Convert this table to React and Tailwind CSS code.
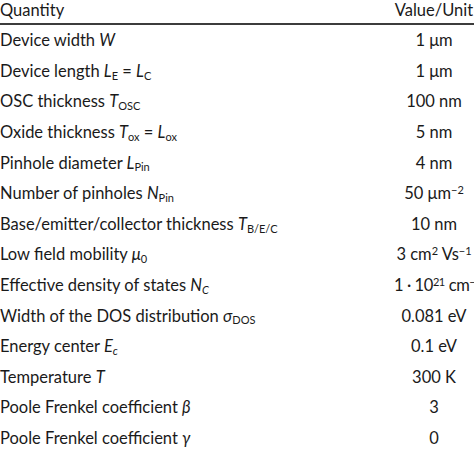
import React from 'react';

const Sub = ({ children }) => <sub className="text-[11px] not-italic">{children}</sub>;
const Sup = ({ children }) => <sup className="text-[11px]">{children}</sup>;
const V = ({ children }) => <i className="italic">{children}</i>;

const ROWS = [
  [<>Device width <V>W</V></>, <>1 μm</>],
  [<>Device length <V>L</V><Sub>E</Sub> = <V>L</V><Sub>C</Sub></>, <>1 μm</>],
  [<>OSC thickness <V>T</V><Sub>OSC</Sub></>, <>100 nm</>],
  [<>Oxide thickness <V>T</V><Sub>ox</Sub> = <V>L</V><Sub>ox</Sub></>, <>5 nm</>],
  [<>Pinhole diameter <V>L</V><Sub>Pin</Sub></>, <>4 nm</>],
  [<>Number of pinholes <V>N</V><Sub>Pin</Sub></>, <>50 μm<Sup>−2</Sup></>],
  [<>Base/emitter/collector thickness <V>T</V><Sub>B/E/C</Sub></>, <>10 nm</>],
  [<>Low field mobility <V>μ</V><Sub>0</Sub></>, <>3 cm<Sup>2</Sup> Vs<Sup>−1</Sup></>],
  [
    <>Effective density of states <V>N</V><sub className="text-[11px] italic">C</sub></>,
    <span className="tracking-[-0.4px]">1{'\u202F'}·{'\u202F'}10<Sup>21</Sup> cm<Sup>−3</Sup></span>,
  ],
  [<>Width of the DOS distribution <V>σ</V><Sub>DOS</Sub></>, <>0.081 eV</>],
  [<>Energy center <V>E</V><sub className="text-[11px] italic">c</sub></>, <>0.1 eV</>],
  [<>Temperature <V>T</V></>, <>300 K</>],
  [<>Poole Frenkel coefficient <V>β</V></>, <>3</>],
  [<>Poole Frenkel coefficient <V>γ</V></>, <>0</>],
];

export default function App() {
  return (
    <div
      className="w-[474px] h-[450px] overflow-hidden bg-white text-[#1a1a1a] text-[16.5px]"
      style={{ fontFamily: 'Lato, "Open Sans", sans-serif' }}
    >
      <div className="flex h-[25px] border-b-2 border-[#3c3c3c] leading-[20px]">
        <div className="flex-1">Quantity</div>
        <div className="w-[80px] text-center whitespace-nowrap">Value/Unit</div>
      </div>
      {ROWS.map(([q, v], i) => (
        <div key={i} className="flex items-center h-[30.6px] leading-[20px]">
          <div className="flex-1 whitespace-nowrap">{q}</div>
          <div className="w-[80px] text-center whitespace-nowrap">{v}</div>
        </div>
      ))}
    </div>
  );
}
